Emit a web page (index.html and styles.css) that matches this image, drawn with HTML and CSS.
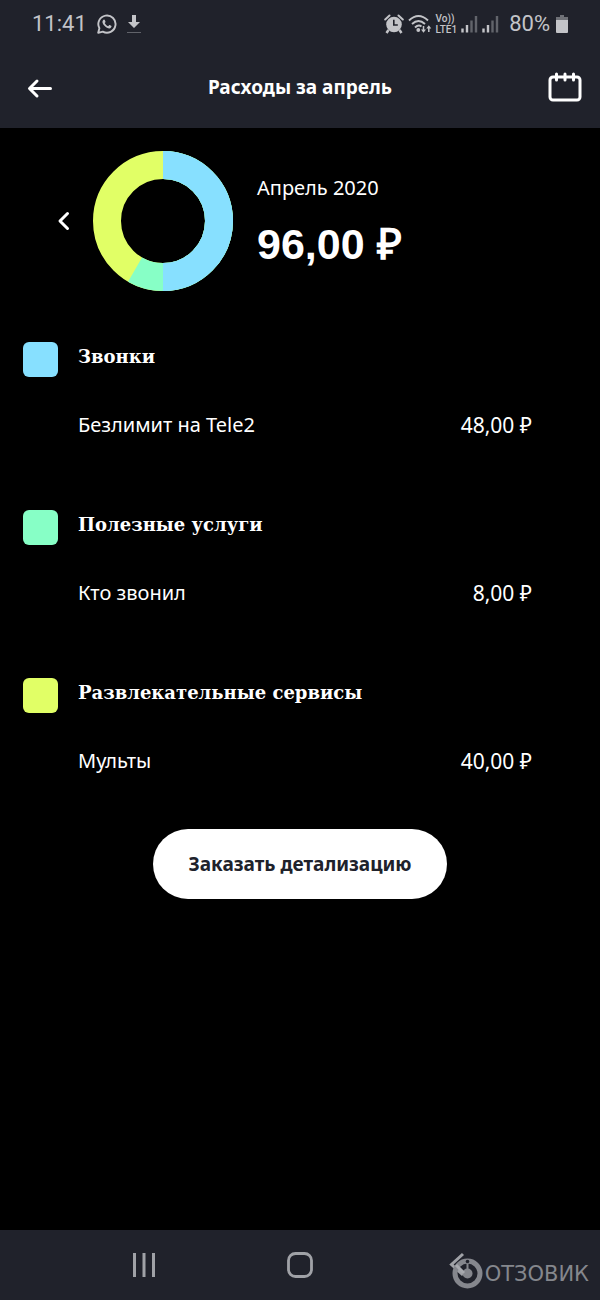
FILE: index.html
```html
<!DOCTYPE html>
<html lang="ru">
<head>
<meta charset="utf-8">
<meta name="viewport" content="width=device-width, initial-scale=1">
<title>Расходы за апрель</title>
<link rel="stylesheet" href="styles.css">
</head>
<body class="screen">
<div class="status">
  <div class="status-group status-left">
    <span>11:41</span>
    <svg width="20" height="20" viewBox="0 0 20 20" aria-hidden="true">
      <path d="M1.2 18.8 2.4 14.2A8.6 8.6 0 1 1 5.8 17.6Z" fill="none" stroke="currentColor" stroke-width="1.9" stroke-linejoin="round"/>
      <path d="M6 6.2C6.600 5.200 7.500 5.300 7.800 6L8.500 7.700C8.600 8.300 7.900 8.700 7.700 9.100C8.400 10.700 9.700 11.700 11.100 12.200L12.100 11.200C12.400 11 12.800 11.100 14.500 12C14.700 13.200 13.700 14.300 12.400 14.400C9.300 14.300 5.400 10.500 5.400 7.800Z" fill="currentColor"/>
    </svg>
    <svg width="14" height="20" viewBox="0 0 14 20" aria-hidden="true">
      <path d="M5 1h4v7h4l-6 6-6-6h4z" fill="currentColor"/>
      <path d="M0 18.500h14" stroke="currentColor" stroke-width="1" opacity=".4"/>
    </svg>
  </div>
  <div class="status-group">
    <svg width="20" height="20" viewBox="0 0 20 20" aria-hidden="true">
      <path d="M1.200 5.500 5.500 1.500M18.800 5.500 14.500 1.500" stroke="currentColor" stroke-width="2" stroke-linecap="round"/>
      <path d="m4.500 16-2 3M15.500 16l2 3" stroke="currentColor" stroke-width="2.500"/>
      <circle cx="10" cy="10.500" r="7.800" fill="currentColor"/>
      <path d="M9.800 5.800v5.200h4" fill="none" stroke="#20222b" stroke-width="1.600"/>
    </svg>
    <svg width="24" height="20" viewBox="0 0 24 20" aria-hidden="true">
      <path d="M1 6.500Q10.500 -2.500 20 6.500M4 10Q10.500 4 17 10M7 13.500Q10.500 10 13.500 12.500" fill="none" stroke="currentColor" stroke-width="1.900"/>
      <circle cx="10.300" cy="16" r="1.900" fill="currentColor"/>
      <path d="M15.500 12v5M20.800 18v-5" stroke="currentColor" stroke-width="1.500"/>
      <path d="M13 15.500h5l-2.500 3.200zM18.300 14.500h5l-2.500-3.200z" fill="currentColor"/>
    </svg>
    <span class="volte"><span>Vo))</span><span>LTE1</span></span>
    <svg width="17" height="18" viewBox="0 0 17 18" aria-hidden="true">
      <path d="M1.500 13.500v4M6 10v7.500" stroke="currentColor" stroke-width="2.400"/>
      <path d="M10.500 5.500v12M15 1v16.500" stroke="#62646b" stroke-width="2.400"/>
    </svg>
    <svg width="17" height="18" viewBox="0 0 17 18" aria-hidden="true">
      <path d="M1.500 13.500v4M6 10v7.500" stroke="currentColor" stroke-width="2.400"/>
      <path d="M10.500 5.500v12M15 1v16.500" stroke="#62646b" stroke-width="2.400"/>
    </svg>
    <span class="percent">80%</span>
    <svg width="12" height="18" viewBox="0 0 12 18" aria-hidden="true">
      <path d="M4 0h4v2h4v3H0V2h4z" fill="#6f7177"/>
      <path d="M0 5h12v12a1 1 0 0 1-1 1H1a1 1 0 0 1-1-1z" fill="currentColor"/>
    </svg>
  </div>
</div>

<header class="header">
  <button class="icon-button" type="button" aria-label="Назад">
    <svg width="36" height="30" viewBox="0 0 36 30"><path d="M33.500 15.500H13M20 8l-7.500 7.500L20 23" fill="none" stroke="currentColor" stroke-width="3" stroke-linecap="round" stroke-linejoin="round"/></svg>
  </button>
  <h1 class="title">Расходы за апрель</h1>
  <button class="icon-button" type="button" aria-label="Выбрать период">
    <svg width="36" height="32" viewBox="0 0 36 32"><rect x="3" y="5" width="30" height="23" rx="3" fill="none" stroke="currentColor" stroke-width="3"/><path d="M9.500 2v6M18 2v6M26.500 2v6" stroke="currentColor" stroke-width="3" stroke-linecap="round"/></svg>
  </button>
</header>

<main class="content">
  <section class="summary">
    <button class="icon-button" type="button" aria-label="Предыдущий месяц">
      <svg width="14" height="20" viewBox="0 0 14 20"><path d="M11.500 2.500 4 10l7.500 7.500" fill="none" stroke="currentColor" stroke-width="3" stroke-linecap="round" stroke-linejoin="round"/></svg>
    </button>
    <svg class="donut" width="140" height="140" viewBox="0 0 140 140" role="img" aria-label="Структура расходов">
      <g fill="none" stroke-width="28" transform="rotate(-90 70 70)">
        <circle cx="70" cy="70" r="56" stroke="#e1ff66"/>
        <circle cx="70" cy="70" r="56" stroke="#87ffc6" pathLength="96" stroke-dasharray="56 40"/>
        <circle cx="70" cy="70" r="56" stroke="#87e0ff" pathLength="96" stroke-dasharray="48 48"/>
      </g>
    </svg>
    <div class="total">
      <span class="month">Апрель 2020</span>
      <strong class="amount">96,00 ₽</strong>
    </div>
  </section>

  <section class="category">
    <span class="swatch swatch-calls"></span>
    <h2 class="category-title">Звонки</h2>
    <div class="item"><span>Безлимит на Tele2</span><span class="price">48,00 ₽</span></div>
  </section>
  <section class="category">
    <span class="swatch swatch-services"></span>
    <h2 class="category-title">Полезные услуги</h2>
    <div class="item"><span>Кто звонил</span><span class="price">8,00 ₽</span></div>
  </section>
  <section class="category">
    <span class="swatch swatch-fun"></span>
    <h2 class="category-title">Развлекательные сервисы</h2>
    <div class="item"><span>Мульты</span><span class="price">40,00 ₽</span></div>
  </section>

  <button class="order" type="button">Заказать детализацию</button>
</main>

<nav class="navbar">
  <button class="nav-button" type="button" aria-label="Недавние">
    <svg width="26" height="26" viewBox="0 0 26 26"><path d="M3.500 1v24M13 1v24M22.500 1v24" stroke="currentColor" stroke-width="3"/></svg>
  </button>
  <button class="nav-button" type="button" aria-label="Домой">
    <svg width="26" height="26" viewBox="0 0 26 26"><rect x="1.500" y="1.500" width="23" height="23" rx="7" fill="none" stroke="currentColor" stroke-width="2.800"/></svg>
  </button>
  <button class="nav-button" type="button" aria-label="Назад">
    <svg width="26" height="26" viewBox="0 0 26 26"><path d="M20 2 8.500 12.500 20 23" fill="none" stroke="currentColor" stroke-width="3"/></svg>
  </button>
  <div class="watermark">
    <svg width="31" height="31" viewBox="0 0 31 31" aria-hidden="true"><circle cx="15.500" cy="15.500" r="12.500" fill="none" stroke="currentColor" stroke-width="5"/><circle cx="15.500" cy="15.500" r="5" fill="currentColor"/><path d="M15.500 5v8" stroke="currentColor" stroke-width="2"/><circle cx="15.500" cy="3.500" r="1.800" fill="#20222b"/><path d="m4 7 8 8" stroke="#a8aaaf" stroke-width="3"/></svg>
    <span>ОТЗОВИК</span>
  </div>
</nav>
</body>
</html>
```
FILE: styles.css
```css
* { box-sizing: border-box; }

.screen {
  margin: 0;
  min-height: 100vh;
  display: flex;
  flex-direction: column;
  background: #000;
  color: #fff;
  font: 20px/30px "Noto Sans", "Open Sans", sans-serif;
}

button {
  border: 0;
  padding: 0;
  background: none;
  color: inherit;
  font: inherit;
  cursor: pointer;
}

svg { display: block; flex: none; }

.status {
  height: 48px;
  padding: 0 32px;
  display: flex;
  align-items: center;
  justify-content: space-between;
  background: #20222b;
  color: #c3c4c8;
  font: 22px/26px Roboto, sans-serif;
}

.status-group {
  display: flex;
  align-items: center;
  gap: 4px;
}

.status-left { gap: 10px; }

.volte {
  display: flex;
  flex-direction: column;
  font-size: 10px;
  font-weight: 500;
  line-height: 11px;
}

.percent { margin: 0 2px 0 6px; }

.header {
  height: 80px;
  padding: 0 17px;
  display: grid;
  grid-template-columns: 36px 1fr 36px;
  align-items: center;
  background: #20222b;
}

.title {
  margin: 0;
  padding-bottom: 2px;
  text-align: center;
  font-size: 19px;
  font-weight: 700;
  line-height: 30px;
}

.content {
  flex: 1;
  display: flex;
  flex-direction: column;
  padding: 23px 23px 40px;
}

.summary {
  display: flex;
  align-items: center;
  padding-left: 33px;
  margin-bottom: 51px;
}

.donut { margin: 0 24px 0 23px; }

.total {
  display: flex;
  flex-direction: column;
  gap: 16px;
}

.amount {
  font: 700 43px/50px "Liberation Sans", Arial, sans-serif;
}

.category {
  display: grid;
  grid-template-columns: 35px 1fr;
  column-gap: 20px;
  align-items: start;
  padding-bottom: 70px;
}

.swatch {
  height: 35px;
  border-radius: 6px;
}

.swatch-calls { background: #87e0ff; }
.swatch-services { background: #87ffc6; }
.swatch-fun { background: #e1ff66; }

.category-title {
  margin: 0;
  font: 700 18px/30px "DejaVu Serif", serif;
}

.item {
  grid-column: 2;
  display: flex;
  justify-content: space-between;
  gap: 16px;
  padding: 33px 45px 0 0;
}

.price {
  font-size: 21px;
  white-space: nowrap;
}

.order {
  align-self: center;
  margin-top: -17px;
  padding: 20px 36px;
  border-radius: 35px;
  background: #fff;
  color: #20222b;
  font-size: 19px;
  font-weight: 700;
  line-height: 30px;
}

.navbar {
  position: relative;
  height: 70px;
  padding: 0 66px;
  display: flex;
  align-items: center;
  background: #20222b;
  color: #a0a2a7;
}

.nav-button {
  flex: 1;
  display: flex;
  justify-content: center;
}

.watermark {
  position: absolute;
  right: 11px;
  bottom: 11px;
  display: flex;
  align-items: center;
  gap: 2px;
  color: #85878d;
  font: 21px/30px "DejaVu Sans", sans-serif;
}
```
